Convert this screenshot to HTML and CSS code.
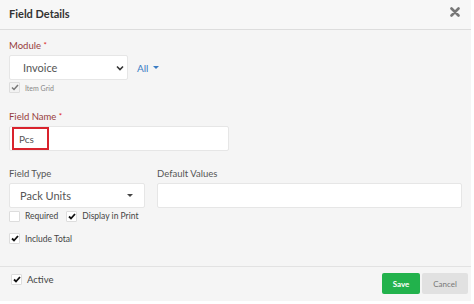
FILE: index.html
```html
<!DOCTYPE html>
<html lang="en">
<head>
  <meta charset="UTF-8">
  <title>Field Details</title>
  <link rel="stylesheet" href="styles.css">
</head>
<body>
  <div class="modal">
    <div class="modal-header">
      <span class="modal-title">Field Details</span>
      <svg class="close" width="10" height="10" viewBox="0 0 10 10"><path d="M1.5 1.5 L8.5 8.5 M8.5 1.5 L1.5 8.5" stroke="#777" stroke-width="2.6" stroke-linecap="round"/></svg>
    </div>

    <div class="modal-body">
      <label class="label req">Module <span class="star">*</span></label>
      <div class="row">
        <div class="select module-select">
          <span>Invoice</span>
          <svg class="chev" width="8" height="6" viewBox="0 0 8 6"><path d="M1 1.5 L4 4.5 L7 1.5" fill="none" stroke="#333" stroke-width="1.6"/></svg>
        </div>
        <span class="all-link">All <span class="caret blue"></span></span>
      </div>
      <div class="check small">
        <span class="box on light"><svg width="8" height="7" viewBox="0 0 8 7"><path d="M1 3.5 L3 5.5 L7 1" fill="none" stroke="#777" stroke-width="1.5"/></svg></span>
        <span>Item Grid</span>
      </div>

      <label class="label req name-label">Field Name <span class="star">*</span></label>
      <div class="input name-input">
        <span class="pcs">Pcs</span>
      </div>

      <div class="two-col">
        <div class="col-left">
          <label class="label">Field Type</label>
          <div class="select type-select">
            <span>Pack Units</span>
            <span class="caret"></span>
          </div>
          <div class="check-row">
            <div class="check">
              <span class="box"></span>
              <span>Required</span>
            </div>
            <div class="check">
              <span class="box on"><svg width="8" height="7" viewBox="0 0 8 7"><path d="M1 3.5 L3 5.5 L7 1" fill="none" stroke="#111" stroke-width="1.8"/></svg></span>
              <span>Display in Print</span>
            </div>
          </div>
        </div>
        <div class="col-right">
          <label class="label">Default Values</label>
          <div class="input"></div>
        </div>
      </div>

      <div class="check total">
        <span class="box on"><svg width="8" height="7" viewBox="0 0 8 7"><path d="M1 3.5 L3 5.5 L7 1" fill="none" stroke="#111" stroke-width="1.8"/></svg></span>
        <span>Include Total</span>
      </div>
    </div>

    <div class="modal-footer">
      <div class="check active">
        <span class="box on"><svg width="8" height="7" viewBox="0 0 8 7"><path d="M1 3.5 L3 5.5 L7 1" fill="none" stroke="#111" stroke-width="1.8"/></svg></span>
        <span>Active</span>
      </div>
      <div class="buttons">
        <button class="btn save">Save</button>
        <button class="btn cancel">Cancel</button>
      </div>
    </div>
  </div>
</body>
</html>
```

FILE: styles.css
```css
body {
  margin: 0;
  padding: 0;
  font-family: Lato, 'Liberation Sans', sans-serif;
  background: #ffffff;
  color: #444;
}

.modal {
  width: 471px;
  height: 301px;
  background: #f5f5f5;
  display: flex;
  flex-direction: column;
}

.modal-header {
  height: 29px;
  border-bottom: 1px solid #dddddd;
  background: #f7f7f7;
  display: flex;
  align-items: center;
  justify-content: space-between;
  padding: 0 9px;
}

.modal-title {
  font-size: 11px;
  font-weight: bold;
  color: #333;
  margin-top: -2px;
}

.close {
  margin-top: -5px;
  margin-right: 2px;
}

.modal-body {
  padding: 10px 9px 0;
  flex: 1;
}

.label {
  display: block;
  font-size: 9.5px;
  color: #555;
  height: 12px;
  margin-bottom: 3px;
}

.label.req {
  color: #963c3c;
}

.star {
  color: #d22;
  font-size: 8px;
  vertical-align: top;
}

.row {
  display: flex;
  align-items: center;
}

.select, .input {
  background: #fff;
  border: 1px solid #e6e6e6;
  border-radius: 2px;
  height: 25px;
  box-sizing: border-box;
  display: flex;
  align-items: center;
  font-size: 11px;
  color: #555;
}

.module-select {
  width: 119px;
  padding: 0 3px 0 13px;
  justify-content: space-between;
}

.all-link {
  color: #3a7cc4;
  font-size: 10px;
  margin-left: 9px;
  display: flex;
  align-items: center;
  gap: 5px;
}

.caret {
  display: inline-block;
  width: 0;
  height: 0;
  border-left: 3px solid transparent;
  border-right: 3px solid transparent;
  border-top: 3px solid #444;
}

.caret.blue {
  border-top-color: #3a7cc4;
}

.check {
  display: flex;
  align-items: center;
  gap: 5px;
  font-size: 8.5px;
  color: #444;
  white-space: nowrap;
}

.check.small {
  font-size: 7px;
  color: #888;
  margin-top: 2px;
  height: 11px;
}

.box {
  width: 9px;
  height: 9px;
  flex-shrink: 0;
  border: 1px solid #ddd;
  background: #fff;
  border-radius: 1px;
  display: flex;
  align-items: center;
  justify-content: center;
}

.box.light {
  background: #f2f2f2;
}

.name-label {
  margin-top: 18px;
}

.name-input {
  width: 220px;
  padding-left: 2px;
}

.pcs {
  border: 2px solid #d9232d;
  height: 23px;
  width: 37px;
  box-sizing: border-box;
  display: flex;
  align-items: center;
  padding-left: 5px;
  font-size: 10px;
}

.two-col {
  display: flex;
  gap: 12px;
  margin-top: 17px;
}

.col-left {
  width: 136px;
}

.col-right {
  width: 309px;
}

.type-select {
  width: 136px;
  padding: 0 11px 0 10px;
  justify-content: space-between;
}

.check-row {
  display: flex;
  gap: 8px;
  margin-top: 2px;
  height: 12px;
}

.total {
  margin-top: 11px;
}

.modal-footer {
  border-top: 1px solid #e2e2e2;
  height: 31px;
  display: flex;
  justify-content: space-between;
  padding: 0 3px 0 11px;
  margin-bottom: 3px;
}

.active {
  align-items: flex-start;
  margin-top: 7px;
  font-size: 9.5px;
}

.buttons {
  display: flex;
  gap: 2px;
  margin-top: 6px;
}

.btn {
  height: 21px;
  border: none;
  border-radius: 2px;
  font-family: Lato, 'Liberation Sans', sans-serif;
  font-size: 8px;
  padding: 0;
}

.save {
  width: 38px;
  background: #22b24c;
  color: #fff;
  font-weight: bold;
}

.cancel {
  width: 46px;
  background: #e1e1e1;
  color: #777;
}
```
